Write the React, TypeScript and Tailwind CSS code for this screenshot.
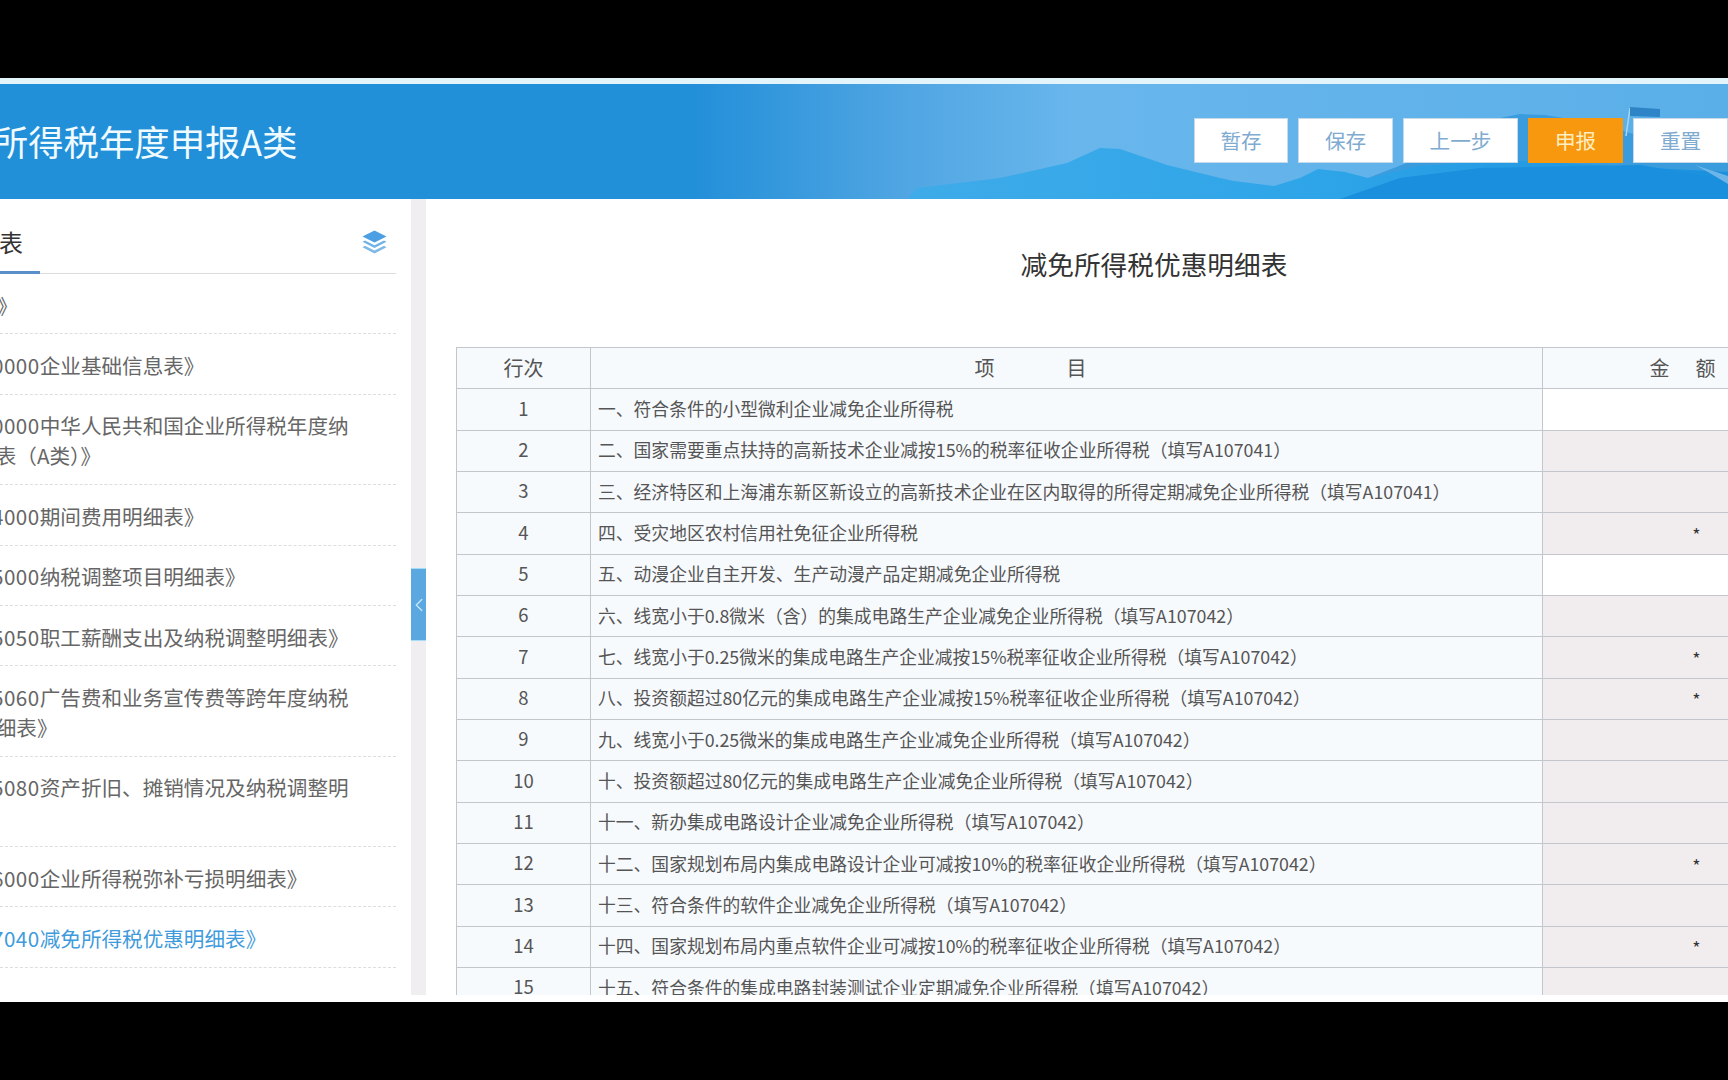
import { ChevronLeft } from "lucide-react"

const menu = [
  { code: "《封面", name: "》" },
  { code: "《A000000", name: "企业基础信息表》" },
  { code: "《A100000", name: "中华人民共和国企业所得税年度纳税申报表（A类）》" },
  { code: "《A104000", name: "期间费用明细表》" },
  { code: "《A105000", name: "纳税调整项目明细表》" },
  { code: "《A105050", name: "职工薪酬支出及纳税调整明细表》" },
  { code: "《A105060", name: "广告费和业务宣传费等跨年度纳税调整明细表》" },
  { code: "《A105080", name: "资产折旧、摊销情况及纳税调整明细表》" },
  { code: "《A106000", name: "企业所得税弥补亏损明细表》" },
  { code: "《A107040", name: "减免所得税优惠明细表》", active: true },
]

const rows = [
  { name: "一、符合条件的小型微利企业减免企业所得税", open: true },
  { name: "二、国家需要重点扶持的高新技术企业减按15%的税率征收企业所得税（填写A107041）" },
  { name: "三、经济特区和上海浦东新区新设立的高新技术企业在区内取得的所得定期减免企业所得税（填写A107041）" },
  { name: "四、受灾地区农村信用社免征企业所得税", star: true },
  { name: "五、动漫企业自主开发、生产动漫产品定期减免企业所得税", open: true },
  { name: "六、线宽小于0.8微米（含）的集成电路生产企业减免企业所得税（填写A107042）" },
  { name: "七、线宽小于0.25微米的集成电路生产企业减按15%税率征收企业所得税（填写A107042）", star: true },
  { name: "八、投资额超过80亿元的集成电路生产企业减按15%税率征收企业所得税（填写A107042）", star: true },
  { name: "九、线宽小于0.25微米的集成电路生产企业减免企业所得税（填写A107042）" },
  { name: "十、投资额超过80亿元的集成电路生产企业减免企业所得税（填写A107042）" },
  { name: "十一、新办集成电路设计企业减免企业所得税（填写A107042）" },
  { name: "十二、国家规划布局内集成电路设计企业可减按10%的税率征收企业所得税（填写A107042）", star: true },
  { name: "十三、符合条件的软件企业减免企业所得税（填写A107042）" },
  { name: "十四、国家规划布局内重点软件企业可减按10%的税率征收企业所得税（填写A107042）", star: true },
  { name: "十五、符合条件的集成电路封装测试企业定期减免企业所得税（填写A107042）" },
]

const cell = "border-[1.5px] border-[#c3c7cb]"
const whiteBtn = "h-[45px] bg-white border border-[#c5d9e8] text-[#7fabd0]"

function HeaderArt() {
  return (
    <svg className="absolute inset-0" width="1728" height="115" viewBox="0 84 1728 115">
      <defs>
        <linearGradient id="front" x1="0" y1="0" x2="1" y2="0">
          <stop offset="0" stopColor="#3fabe9" />
          <stop offset="0.5" stopColor="#2ea5e8" />
          <stop offset="1" stopColor="#1a90de" />
        </linearGradient>
      </defs>
      <path d="M1368 178L1440 150L1500 118L1520 114L1545 115L1600 124L1640 136L1728 150V199H1368Z" fill="#3b9cdd" />
      <path d="M1626 136L1630 108" stroke="#a8d6f0" strokeWidth="1.5" fill="none" />
      <path d="M1630 107L1660 109L1660 117L1630 116Z" fill="#2d85c8" />
      <path
        d="M907 199L917 188L1000 178L1067 163L1100 148L1120 149L1167 165L1220 178L1234 181L1274 186L1300 178L1318 169L1345 172L1368 178L1419 166L1500 160L1728 172V199Z"
        fill="url(#front)"
      />
      <path d="M1340 199L1400 178L1480 168L1640 165L1728 180V199Z" fill="#1a8fdd" />
      <path d="M1695 165L1728 176V184L1708 172Z" fill="#6db5e6" />
    </svg>
  )
}

function LayersIcon() {
  return (
    <svg width="25" height="24" viewBox="0 0 25 24">
      <path d="M12.5 0.5L24.5 6.5L12.5 12.5L0.5 6.5Z" fill="#4b9fe2" />
      <path d="M3 10.5L12.5 15.3L22 10.5L24.5 11.8L12.5 18L0.5 11.8Z" fill="#6fb3e8" />
      <path d="M3 15.7L12.5 20.5L22 15.7L24.5 17.2L12.5 23.5L0.5 17.2Z" fill="#7fb9e6" />
    </svg>
  )
}

export default function App() {
  return (
    <div className="w-[1728px] h-[1080px] overflow-hidden bg-black flex flex-col font-['Noto_Sans_CJK_SC','Noto_Sans',sans-serif]">
      <div className="h-[78px] shrink-0" />
      <div className="h-[6px] shrink-0 bg-[#e3f4fb]" />

      <header className="relative h-[115px] shrink-0 flex items-start justify-between overflow-hidden bg-[linear-gradient(90deg,#228fd9_0%,#228fd9_40%,#4fa5e2_52%,#68b6ec_62%,#5aafe8_100%)]">
        <HeaderArt />
        <h1 className="relative -ml-[78px] h-[115px] leading-[113px] text-[35.4px] text-[#f0fbff] whitespace-nowrap">
          企业所得税年度申报A类
        </h1>
        <div className="relative flex gap-[10px] mt-[34px] text-[20.6px]">
          <button className={`w-[94px] ${whiteBtn}`}>暂存</button>
          <button className={`w-[95px] ${whiteBtn}`}>保存</button>
          <button className={`w-[115px] ${whiteBtn}`}>上一步</button>
          <button className="w-[95px] h-[45px] bg-[#f7980e] text-[#fdeec2]">申报</button>
          <button className={`w-[95px] ${whiteBtn}`}>重置</button>
        </div>
      </header>

      <div className="h-[796px] shrink-0 flex bg-white overflow-hidden">
        <aside className="w-[411px] shrink-0 pr-[15px] overflow-hidden">
          <div className="h-[75px] flex items-end justify-between border-b border-[#dcdcdc]">
            <div className="w-[40px] h-[75px] -mb-px border-b-[3px] border-[#5b8fc9] overflow-hidden">
              <div className="-ml-[49px] mt-[25px] w-[100px] text-[24px] leading-[36px] text-[#333]">申报表</div>
            </div>
            <div className="mb-[19px] mr-[9px]">
              <LayersIcon />
            </div>
          </div>
          {menu.map((item) => (
            <div key={item.code} className="border-b border-dashed border-[#dddddd] pt-[15.7px] pb-[13.7px]">
              <div
                className={`-ml-[66px] w-[429px] text-[20.6px] leading-[30px] ${
                  item.active ? "text-[#3f9bdc]" : "text-[#666666]"
                }`}
              >
                <span className="tracking-[0.5px]">{item.code}</span>
                {item.name}
              </div>
            </div>
          ))}
        </aside>

        <div className="w-[15px] shrink-0 bg-[#f0eef0]">
          <div className="mt-[369px] h-[73px] bg-[#5aa8df] border-y border-[#a6dcf5] flex items-center justify-center">
            <ChevronLeft className="w-[22px] h-[22px] shrink-0 text-[#c4e6fa]" strokeWidth={1.5} />
          </div>
        </div>

        <main className="flex-1 min-w-0 overflow-hidden pl-[30px]">
          <div className="w-[1396px]">
            <h2 className="h-[148px] pt-[47px] text-center text-[26.7px] leading-[36px] text-[#333333]">
              减免所得税优惠明细表
            </h2>
            <table className="w-[1366px] table-fixed border-collapse text-[17.8px] text-[#555555]">
              <colgroup>
                <col className="w-[134px]" />
                <col className="w-[952px]" />
                <col className="w-[280px]" />
              </colgroup>
              <thead>
                <tr className="h-[41.33px] bg-[#f7fafd] text-[20px]">
                  <th className={`${cell} font-normal`}>行次</th>
                  <th className={`${cell} font-normal`}>
                    <span className="mr-[72px]">项</span>
                    <span className="mr-[72px]">目</span>
                  </th>
                  <th className={`${cell} font-normal`}>
                    <span className="mr-[26px]">金</span>
                    <span>额</span>
                  </th>
                </tr>
              </thead>
              <tbody>
                {rows.map((row, i) => (
                  <tr key={row.name} className="h-[41.33px]">
                    <td className={`${cell} bg-[#f7fafd] pb-[2px] text-center text-[18.5px]`}>{i + 1}</td>
                    <td className={`${cell} bg-[#f7fafd] pl-[7px] pb-[2px] whitespace-nowrap`}>{row.name}</td>
                    <td className={`${cell} ${row.open ? "bg-white" : "bg-[#f1ecee]"} pl-[28px] pt-[2px] text-center text-[#333333]`}>
                      {row.star ? "*" : ""}
                    </td>
                  </tr>
                ))}
              </tbody>
            </table>
          </div>
        </main>
      </div>

      <div className="h-[7px] shrink-0 bg-white" />
    </div>
  )
}
